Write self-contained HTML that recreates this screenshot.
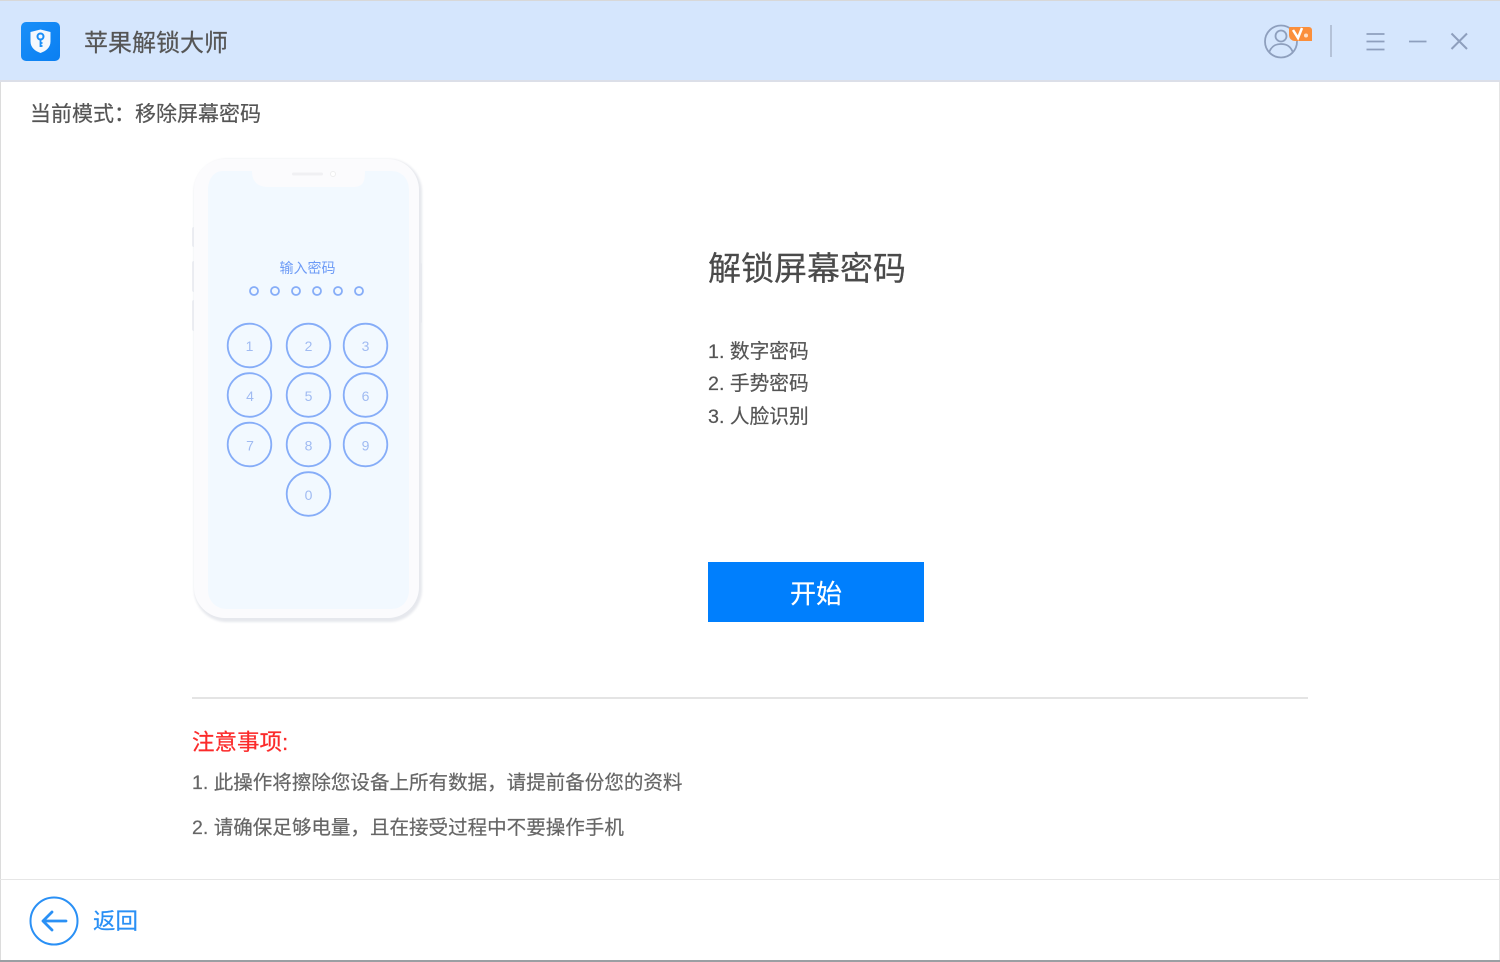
<!DOCTYPE html>
<html lang="zh-CN">
<head>
<meta charset="utf-8">
<title>苹果解锁大师</title>
<style>
html,body{margin:0;padding:0;background:#fff}
body{width:1500px;height:962px;position:relative;overflow:hidden;font-family:"Liberation Sans","Noto Sans CJK SC",sans-serif;color:#555}
.a{position:absolute;white-space:nowrap}
.t{line-height:1;-webkit-text-stroke:.2px currentColor;filter:blur(.3px)}
</style>
</head>
<body>
<div class="a" style="left:0;top:0;width:1500px;height:82px;background:#d5e6fd;border-top:1px solid #d8d8d8;border-bottom:2px solid #dcdfe8;box-sizing:border-box"></div>
<div class="a" style="left:0;top:82px;width:1px;height:880px;background:#dcdcdc"></div>
<div class="a" style="left:1499px;top:82px;width:1px;height:880px;background:#e4e4e4"></div>
<div class="a" style="left:0;top:960px;width:1500px;height:2px;background:#9a9fa3"></div>

<svg class="a" style="left:21px;top:22px" width="39" height="39" viewBox="0 0 39 39">
<defs><linearGradient id="g" x1="0" y1="0" x2="1" y2="1"><stop offset="0" stop-color="#1a8ff8"/><stop offset="1" stop-color="#0a7ff2"/></linearGradient></defs>
<rect width="39" height="39" rx="5" fill="url(#g)"/>
<path d="M19.500 7.500 L29.500 10 V19.500 C29.500 25.500 25 29 19.500 31 C14 29 9.500 25.500 9.500 19.500 V10 Z" fill="#f4f8fd"/>
<circle cx="19.500" cy="14.500" r="3" fill="none" stroke="#1a8ff8" stroke-width="2"/>
<path d="M19.500 17.500 V25 M19.500 21 H21.500 M19.500 24 H21.500" fill="none" stroke="#1a8ff8" stroke-width="1.800"/>
</svg>
<div class="a t" style="left:84px;top:32px;font-size:24px;color:#555">苹果解锁大师</div>

<svg class="a" style="left:1260px;top:20px" width="210" height="44" viewBox="0 0 210 44" fill="none" stroke="#8e9fbd" stroke-width="1.800">
<circle cx="21" cy="21.500" r="16"/>
<circle cx="21" cy="16" r="5.500"/>
<path d="M9.500 31.500 C12 25.500 16 24 21 24 C26 24 30 25.500 32.500 31.500"/>
<path d="M30 7 H49 A3 3 0 0 1 52 10 V21 H35 A6 6 0 0 1 29 15 V8 Z" fill="#fb8f3b" stroke="none"/>
<path d="M33 10 L38 18 L42 8" stroke="#fff" stroke-width="2.500"/>
<circle cx="46" cy="15.500" r="2" fill="#fde0c8" stroke="none"/>
<path d="M71 5 V37" stroke="#a9b6cc" stroke-width="1.500"/>
<path d="M106.500 14 H124.500 M106.500 21.500 H124.500 M106.500 29.500 H124.500" stroke="#8e9fbd"/>
<path d="M149 21.500 H166.500"/>
<path d="M191.500 13.500 L207 29 M207 13.500 L191.500 29" stroke-width="2"/>
</svg>

<div class="a t" style="left:30px;top:104px;font-size:21px;color:#555">当前模式：移除屏幕密码</div>

<svg class="a" style="left:190px;top:155px" width="236" height="470" viewBox="0 0 236 470">
<defs><filter id="b"><feGaussianBlur stdDeviation="1"/></filter></defs>
<g fill="#eceef3">
<rect x="2" y="72" width="4" height="20" rx="2"/>
<rect x="2" y="106" width="4" height="31" rx="2"/>
<rect x="2" y="145" width="4" height="31" rx="2"/>
<rect x="229" y="108" width="3" height="60" rx="1.500"/>
</g>
<rect x="4" y="4" width="228" height="463" rx="33" fill="#e6e8ed" filter="url(#b)"/>
<rect x="4" y="4" width="225" height="459" rx="31" fill="#fbfbfd"/>
<path d="M33 16 H62 C62 27 68 32 78 32 H163 C173 32 175 27 175 16 H201 C212 16 219 24 219 35 V435 C219 446 212 454 201 454 H37 C26 454 18 446 18 435 V35 C18 24 24 16 33 16 Z" fill="#f2f9ff"/>
<rect x="102" y="17.500" width="31" height="3" rx="1.500" fill="#f0f0f3"/>
<circle cx="143" cy="19" r="2.500" fill="#fff" stroke="#eee" stroke-width="1"/>
<text x="117.500" y="118" text-anchor="middle" font-size="14" fill="#6d9bf6" font-family="'Liberation Sans','Noto Sans CJK SC',sans-serif">输入密码</text>
<g fill="none" stroke="#86adf8" stroke-width="1.800">
<circle cx="64" cy="136" r="4"/><circle cx="85" cy="136" r="4"/><circle cx="106" cy="136" r="4"/><circle cx="127" cy="136" r="4"/><circle cx="148" cy="136" r="4"/><circle cx="169" cy="136" r="4"/>
<circle cx="59.500" cy="190.500" r="21.800"/><circle cx="118.500" cy="190.500" r="21.800"/><circle cx="175.500" cy="190.500" r="21.800"/>
<circle cx="59.500" cy="240" r="21.800"/><circle cx="118.500" cy="240" r="21.800"/><circle cx="175.500" cy="240" r="21.800"/>
<circle cx="59.500" cy="289.500" r="21.800"/><circle cx="118.500" cy="289.500" r="21.800"/><circle cx="175.500" cy="289.500" r="21.800"/>
<circle cx="118.500" cy="339" r="21.800"/>
</g>
<g font-size="14" fill="#a0bbf2" text-anchor="middle" font-family="'Liberation Sans',sans-serif">
<text x="59.500" y="196">1</text><text x="118.500" y="196">2</text><text x="175.500" y="196">3</text>
<text x="60" y="246">4</text><text x="118.500" y="246">5</text><text x="175.500" y="246">6</text>
<text x="60" y="295.500">7</text><text x="118.500" y="295.500">8</text><text x="175.500" y="295.500">9</text>
<text x="118.500" y="345">0</text>
</g>
</svg>

<div class="a t" style="left:708px;top:252px;font-size:33px;color:#4a4a4a">解锁屏幕密码</div>
<div class="a t" style="left:708px;top:343px;font-size:19.700px;color:#555">1. 数字密码</div>
<div class="a t" style="left:708px;top:375px;font-size:19.700px;color:#555">2. 手势密码</div>
<div class="a t" style="left:708px;top:408px;font-size:19.700px;color:#555">3. 人脸识别</div>

<div class="a" style="left:708px;top:562px;width:216px;height:60px;background:#007ffd"></div>
<div class="a t" style="left:708px;top:562px;width:216px;height:60px;color:#fff;font-size:26px;line-height:64px;text-align:center">开始</div>

<div class="a" style="left:192px;top:697px;width:1116px;height:2px;background:#e4e4e4"></div>

<div class="a t" style="left:192px;top:732px;font-size:22.500px;color:#fb2a2a">注意事项:</div>
<div class="a t" style="left:192px;top:774px;font-size:19.550px;color:#666">1. 此操作将擦除您设备上所有数据，请提前备份您的资料</div>
<div class="a t" style="left:192px;top:819px;font-size:19.550px;color:#666">2. 请确保足够电量，且在接受过程中不要操作手机</div>

<div class="a" style="left:0;top:879px;width:1500px;height:1px;background:#e6e6e6"></div>
<svg class="a" style="left:29px;top:896px" width="50" height="50" viewBox="0 0 50 50" fill="none" stroke="#2a90f5">
<circle cx="25" cy="25" r="23.500" stroke-width="2"/>
<path d="M14 25 H37 M23 16 L14 25 L23 34" stroke-width="2.800" stroke-linecap="round" stroke-linejoin="round"/>
</svg>
<div class="a t" style="left:93px;top:911px;font-size:22.500px;color:#2a90f5">返回</div>
</body>
</html>
